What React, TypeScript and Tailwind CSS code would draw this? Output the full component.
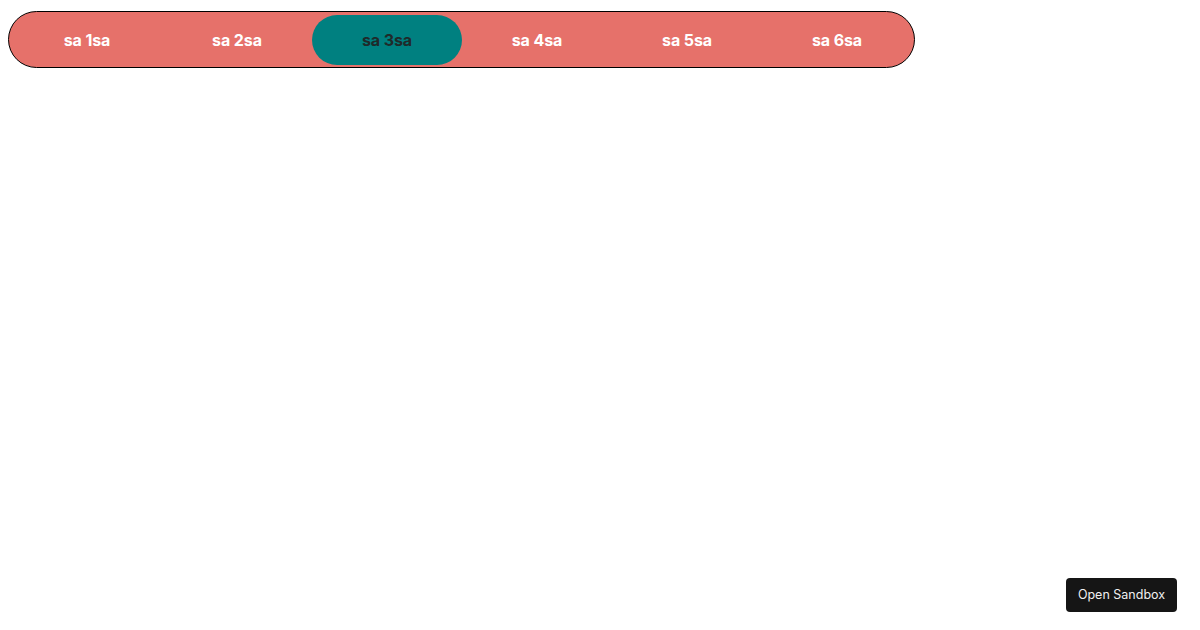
import React from "react";

export default function App() {
  const items = ["sa 1sa", "sa 2sa", "sa 3sa", "sa 4sa", "sa 5sa", "sa 6sa"];
  const active = 2;
  return (
    <div className="relative w-[1200px] h-[630px] bg-white" style={{ fontFamily: "Inter, 'Noto Sans', sans-serif" }}>
      <nav className="ml-[8px] pt-[11px]">
        <div className="w-[907px] h-[57px] rounded-full border border-black bg-[#e6716a] flex pl-[3px] pt-[3px]">
          {items.map((t, i) => (
            <div
              key={t}
              className={
                "w-[150px] h-[50px] pb-[1px] rounded-full flex items-center justify-center text-[16px] font-bold tracking-[-0.1px] " +
                (i === active ? "bg-[#008080] text-[#1f2a2a]" : "text-white")
              }
            >
              {t}
            </div>
          ))}
        </div>
      </nav>
      <button className="absolute left-[1066px] top-[578px] w-[111px] h-[34px] pt-[1px] rounded-[4px] bg-[#151515] text-[#f0f0f0] text-[12.5px] flex items-center justify-center">
        Open Sandbox
      </button>
    </div>
  );
}
